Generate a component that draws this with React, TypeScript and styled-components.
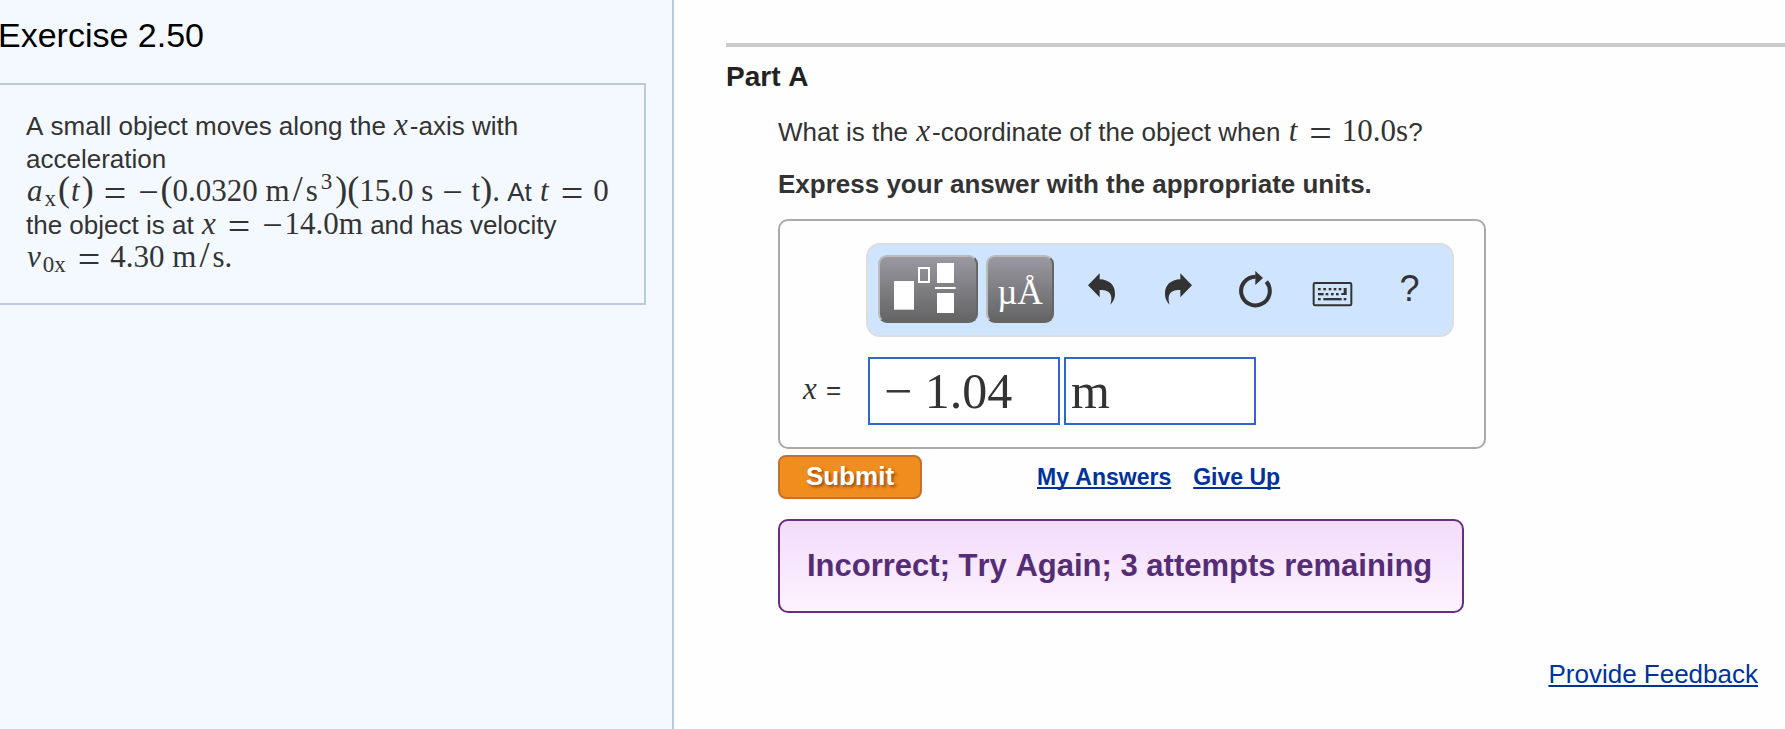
import React from 'react';
import styled, { createGlobalStyle } from 'styled-components';

const sans = '"Liberation Sans", Arial, Helvetica, sans-serif';
const serif = '"Liberation Serif", "Times New Roman", serif';

const GlobalStyle = createGlobalStyle`
  *, *::before, *::after { box-sizing: border-box; }
  body {
    margin: 0;
    background: #fefefe;
    color: #333;
    font: 26px/33px ${sans};
    font-kerning: none;
    overflow-x: hidden;
  }
  h1, h2, p { margin: 0; }
`;

const Page = styled.div`
  display: grid;
  grid-template-columns: minmax(0, 674fr) minmax(0, 1111fr);
  min-height: 100vh;
`;

const ProblemPanel = styled.aside`
  background: #f4f9ff;
  border-right: 2px solid #b9cbdd;
  padding: 15px 26px 24px 0;
  overflow: hidden;
`;

const ProblemContent = styled.div`
  margin-left: -2px;
`;

const Title = styled.h1`
  color: #000;
  font-size: 34px;
  font-weight: 400;
  line-height: 40px;
`;

const ProblemBox = styled.div`
  margin-top: 28px;
  padding: 25px 24px 28px 26px;
  border: 2px solid #b9cbdd;
`;

const WorkPanel = styled.main`
  padding: 43px 0 24px 52px;
`;

const Rule = styled.hr`
  height: 4px;
  margin: 0;
  border: 0;
  background: #ccc;
`;

const PartTitle = styled.h2`
  margin-top: 14px;
  color: #222;
  font-size: 28px;
  line-height: 32px;
`;

const PartBody = styled.div`
  padding: 23px 27px 0 52px;
`;

const Instruction = styled.p`
  margin-top: 19px;
  font-weight: 700;
`;

const MathText = styled.span`
  font-family: ${serif};
  font-size: 31px;
  line-height: 0;
  white-space: nowrap;
`;

const Variable = styled.i`
  margin: 0 2px 0 1px;
`;

const Relation = styled.span`
  margin: 0 10px;
  font-size: 40px;
  vertical-align: -6px;
`;

const Minus = styled.span<{ $binary?: boolean }>`
  margin: 0 ${(p) => (p.$binary ? 9 : 2)}px;
  font-size: 36px;
  vertical-align: -3px;
`;

const Paren = styled.span`
  font-size: 36px;
`;

const Slash = styled.span`
  margin: 0 3px;
  font-size: 36px;
`;

const Sub = styled.sub`
  margin-right: 2px;
  font-size: 23px;
  line-height: 0;
  vertical-align: -5px;
`;

const Sup = styled.sup`
  margin: 0 3px;
  font-size: 23px;
  line-height: 0;
  vertical-align: 12px;
`;

const AnswerBox = styled.div`
  display: grid;
  grid-template-columns: 64px minmax(0, 1fr);
  row-gap: 20px;
  align-items: center;
  max-width: 708px;
  margin-top: 18px;
  padding: 22px 30px 22px 22px;
  border: 2px solid #aaa;
  border-radius: 10px;
`;

const Toolbar = styled.div`
  grid-column: 2;
  display: flex;
  padding: 10px 10px 12px;
  background: #cfe5ff;
  border: 2px solid #ddd;
  border-radius: 14px;
`;

const ToolButton = styled.button`
  flex: none;
  width: 77px;
  height: 68px;
  padding: 0;
  border: 0;
  background: none;
  color: #333;
  font: 36px/68px ${sans};
  cursor: pointer;
  svg { display: block; }
`;

const KeyButton = styled.button<{ $width: number }>`
  flex: none;
  width: ${(p) => p.$width}px;
  height: 68px;
  margin-right: 8px;
  padding: 0;
  border: 2px solid;
  border-color: #bbb #666 #666 #bbb;
  border-radius: 9px;
  background: linear-gradient(#9a98a1, #646464);
  color: #fff;
  font: 35px/56px ${serif};
  cursor: pointer;
  svg { display: block; }
  & + ${ToolButton} { margin-left: 1px; }
`;

const KeyGlyphs = styled.span`
  display: block;
  padding-top: 8px;
`;

const FieldLabel = styled.label`
  padding-bottom: 2px;
`;

const Fields = styled.div`
  display: flex;
  gap: 4px;
  padding-left: 2px;
`;

const Field = styled.input<{ $inset: number }>`
  width: 192px;
  min-width: 0;
  height: 68px;
  padding: 0 4px 0 ${(p) => p.$inset}px;
  border: 2px solid #36c;
  border-radius: 0;
  background: #fff;
  color: #333;
  font: 50px ${serif};
  outline: none;
`;

const Actions = styled.div`
  display: flex;
  align-items: center;
  gap: 22px;
  margin-top: 6px;
`;

const SubmitButton = styled.button`
  width: 144px;
  height: 44px;
  margin-right: 93px;
  padding: 0 0 2px;
  border: 2px solid #c4702f;
  border-radius: 8px;
  background: #ef8d1f;
  color: #fff;
  font: 700 26px/38px ${sans};
  text-shadow: 2px 2px 3px rgba(110, 40, 0, 0.65);
  cursor: pointer;
`;

const Link = styled.a<{ $strong?: boolean }>`
  color: #039;
  font-size: ${(p) => (p.$strong ? 23 : 26)}px;
  font-weight: ${(p) => (p.$strong ? 700 : 400)};
  text-decoration: underline;
  text-decoration-thickness: 2px;
  text-decoration-skip-ink: none;
  text-underline-offset: 2px;
`;

const Feedback = styled.div`
  width: fit-content;
  margin-top: 20px;
  padding: 27px 30px 27px 27px;
  border: 2px solid #6a2d86;
  border-radius: 10px;
  background: linear-gradient(#f2dcfc, #fef2ff);
  color: #552d75;
  font-size: 31px;
  font-weight: 700;
  line-height: 36px;
`;

const Footer = styled.footer`
  margin-top: 45px;
  text-align: right;
`;

const TemplateIcon = () => (
  <svg width="96" height="64" viewBox="6 6 288 192" fill="#fff" aria-hidden="true">
    <rect x="48" y="78" width="60" height="86" />
    <rect x="123" y="39" width="30" height="42" fill="none" stroke="#fff" strokeWidth="6" />
    <rect x="177" y="24" width="51" height="60" />
    <rect x="171" y="96" width="62" height="6" />
    <rect x="177" y="114" width="51" height="60" />
  </svg>
);

const ToolIcon = ({ children }: { children: React.ReactNode }) => (
  <svg width="77" height="68" viewBox="0 0 231 204" fill="currentColor" aria-hidden="true">
    {children}
  </svg>
);

const arrow =
  'M75 91 L110 55 V73 C138 74 157 90 156 117 C156 132 149 142 142 149 C146 137 147 124 140 114 C133 106 123 105 110 105 V127 Z';

const KeyboardShape = () => (
  <>
    <rect x="59" y="84" width="113" height="67" rx="4" fill="none" stroke="currentColor" strokeWidth="6" />
    {[72, 88, 104, 119, 134].map((x) => (
      <rect key={x} x={x} y="99" width="8" height="7" />
    ))}
    <path d="M149 99 h9 v21 h-16 v-6 h7 z" />
    <rect x="72" y="114" width="17" height="7" />
    {[95, 111, 126].map((x) => (
      <rect key={x} x={x} y="114" width="8" height="7" />
    ))}
    <rect x="72" y="129" width="8" height="7" />
    <rect x="88" y="129" width="55" height="7" />
    <rect x="149" y="129" width="8" height="7" />
  </>
);

export default function App() {
  return (
    <>
      <GlobalStyle />
      <Page>
        <ProblemPanel>
          <ProblemContent>
            <Title>Exercise 2.50</Title>
            <ProblemBox>
              <p>
                A small object moves along the <MathText><Variable>x</Variable></MathText>-axis with acceleration{' '}
                <MathText>
                  <Variable>a</Variable><Sub>x</Sub><Paren>(</Paren><Variable>t</Variable><Paren>)</Paren>
                  <Relation>=</Relation><Minus>−</Minus><Paren>(</Paren>0.0320 m<Slash>/</Slash>s<Sup>3</Sup><Paren>)</Paren>
                  <Paren>(</Paren>15.0 s<Minus $binary>−</Minus>t<Paren>)</Paren>.
                </MathText>{' '}
                At{' '}
                <MathText><Variable>t</Variable><Relation>=</Relation>0</MathText>{' '}
                the object is at{' '}
                <MathText><Variable>x</Variable><Relation>=</Relation><Minus>−</Minus>14.0m</MathText>{' '}
                and has velocity{' '}
                <MathText><Variable>v</Variable><Sub>0x</Sub><Relation>=</Relation>4.30 m<Slash>/</Slash>s.</MathText>
              </p>
            </ProblemBox>
          </ProblemContent>
        </ProblemPanel>
        <WorkPanel>
          <Rule />
          <PartTitle>Part A</PartTitle>
          <PartBody>
            <p>
              What is the <MathText><Variable>x</Variable></MathText>-coordinate of the object when{' '}
              <MathText><Variable>t</Variable><Relation>=</Relation>10.0s</MathText>?
            </p>
            <Instruction>Express your answer with the appropriate units.</Instruction>
            <AnswerBox>
              <Toolbar role="toolbar" aria-label="Equation tools">
                <KeyButton type="button" $width={100} aria-label="Templates"><TemplateIcon /></KeyButton>
                <KeyButton type="button" $width={68}><KeyGlyphs>µÅ</KeyGlyphs></KeyButton>
                <ToolButton type="button" aria-label="Undo">
                  <ToolIcon><path d={arrow} /></ToolIcon>
                </ToolButton>
                <ToolButton type="button" aria-label="Redo">
                  <ToolIcon><path d={arrow} transform="translate(231 0) scale(-1 1)" /></ToolIcon>
                </ToolButton>
                <ToolButton type="button" aria-label="Reset">
                  <ToolIcon>
                    <path d="M148 80 A43 43 0 1 1 116 65" fill="none" stroke="currentColor" strokeWidth="12" />
                    <path d="M115 48 L138 69 L115 90 Z" />
                  </ToolIcon>
                </ToolButton>
                <ToolButton type="button" aria-label="Keyboard shortcuts">
                  <ToolIcon><KeyboardShape /></ToolIcon>
                </ToolButton>
                <ToolButton type="button">?</ToolButton>
              </Toolbar>
              <FieldLabel htmlFor="value"><MathText><Variable>x</Variable></MathText> =</FieldLabel>
              <Fields>
                <Field id="value" $inset={14} defaultValue="− 1.04" />
                <Field aria-label="Units" $inset={5} defaultValue="m" />
              </Fields>
            </AnswerBox>
            <Actions>
              <SubmitButton type="submit">Submit</SubmitButton>
              <Link $strong href="#answers">My Answers</Link>
              <Link $strong href="#give-up">Give Up</Link>
            </Actions>
            <Feedback role="status">Incorrect; Try Again; 3 attempts remaining</Feedback>
            <Footer><Link href="#feedback">Provide Feedback</Link></Footer>
          </PartBody>
        </WorkPanel>
      </Page>
    </>
  );
}
